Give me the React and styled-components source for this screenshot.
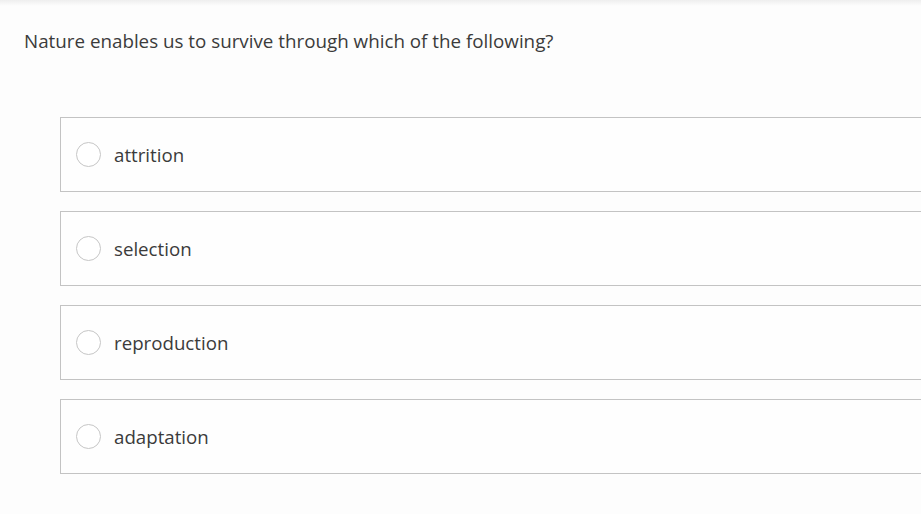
import React from "react";
import styled, { createGlobalStyle } from "styled-components";

const Global = createGlobalStyle`
  html, body { margin: 0; padding: 0; background: #fdfdfd; overflow: hidden; }
  body { font-family: "Open Sans", "Liberation Sans", sans-serif; color: #3b3b3b; }
`;

const Page = styled.div`
  position: relative;
  width: 921px;
  height: 514px;
  overflow: hidden;
  background: #fdfdfd;
  &::before {
    content: "";
    position: absolute;
    top: 0; left: 0; right: 0;
    height: 6px;
    background: linear-gradient(to bottom, rgba(0,0,0,0.06), rgba(0,0,0,0));
  }
`;

const Question = styled.h1`
  margin: 0;
  padding: 28px 0 0 24px;
  font-size: 18.8px;
  font-weight: 400;
  line-height: 26px;
  color: #3b3b3b;
`;

const Options = styled.div`
  display: flex;
  flex-direction: column;
  gap: 19px;
  margin: 63px 0 0 60px;
  width: 900px;
`;

const Option = styled.label`
  display: flex;
  align-items: center;
  gap: 13px;
  height: 73px;
  padding-left: 15px;
  border: 1px solid #c3c3c3;
  background: #fefefe;
  cursor: pointer;
`;

const Radio = styled.span`
  box-sizing: border-box;
  width: 25px;
  height: 25px;
  border-radius: 50%;
  border: 1px solid #c6c6c6;
  background: #fff;
  flex: none;
`;

const Label = styled.span`
  font-size: 18.7px;
  line-height: 24px;
  color: #3b3b3b;
  transform: translateY(-0.5px);
`;

const items = ["attrition", "selection", "reproduction", "adaptation"];

export default function App() {
  return (
    <Page>
      <Global />
      <Question>Nature enables us to survive through which of the following?</Question>
      <Options>
        {items.map((t) => (
          <Option key={t}>
            <Radio />
            <Label>{t}</Label>
          </Option>
        ))}
      </Options>
    </Page>
  );
}
